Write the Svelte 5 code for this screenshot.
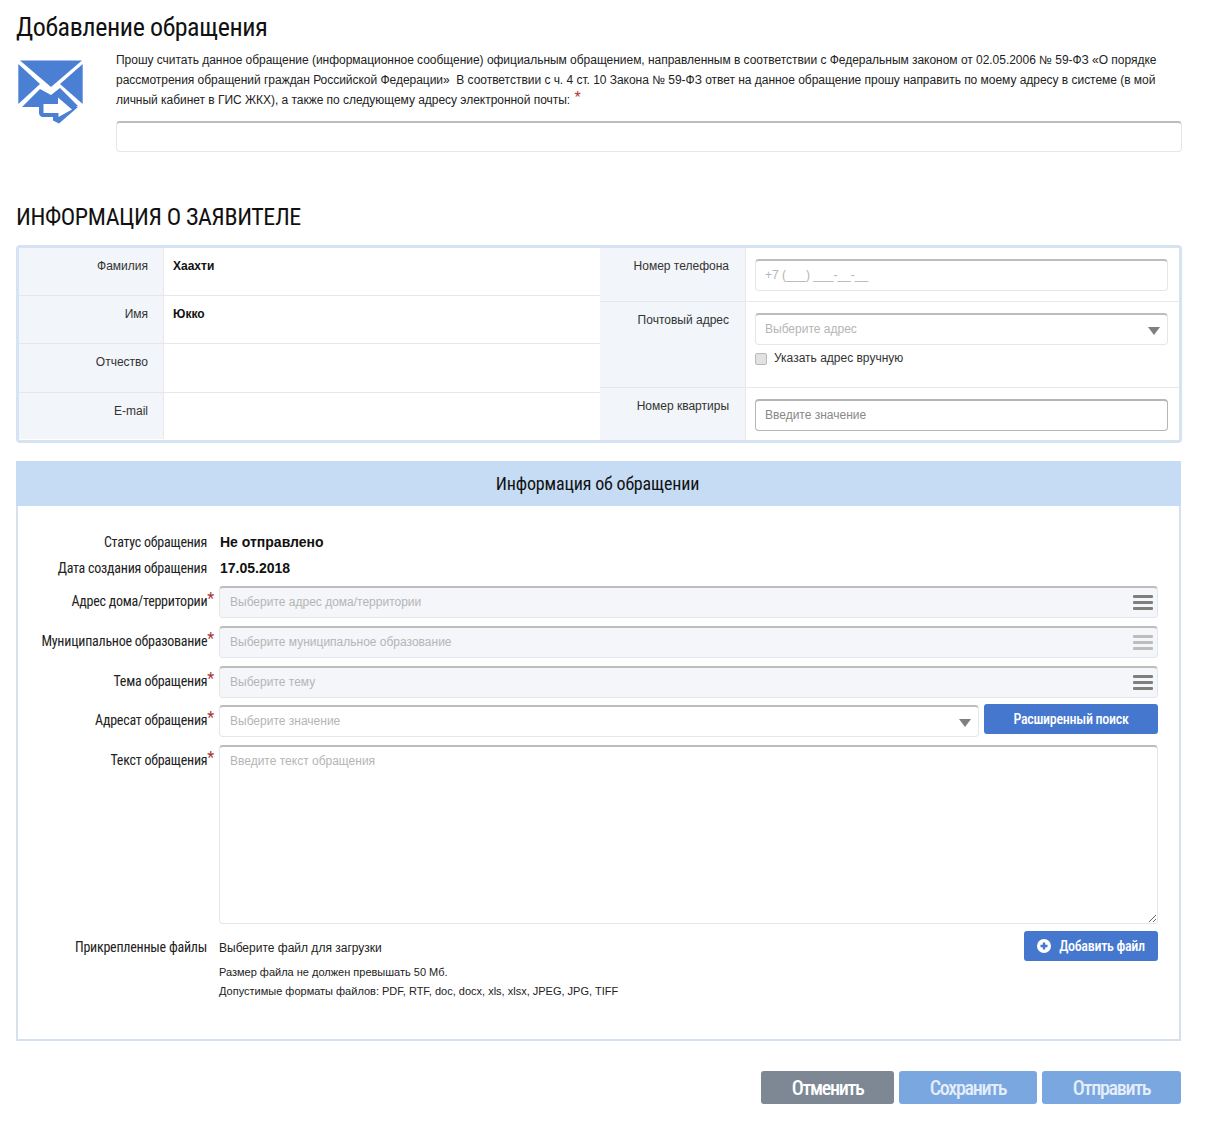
<script>
  const applicant = [
    { label: 'Фамилия', value: 'Хаахти' },
    { label: 'Имя', value: 'Юкко' },
    { label: 'Отчество', value: '' },
    { label: 'E-mail', value: '' }
  ];

  const pickers = [
    { label: 'Адрес дома/территории', placeholder: 'Выберите адрес дома/территории', faded: false },
    { label: 'Муниципальное образование', placeholder: 'Выберите муниципальное образование', faded: true },
    { label: 'Тема обращения', placeholder: 'Выберите тему', faded: false }
  ];
</script>

<div class="page">
  <h1>Добавление обращения</h1>

  <div class="intro">
    <svg class="mail-icon" viewBox="0 0 66 65" width="66" height="65">
      <path fill="#4a7fd4" d="M2 1.5H64L33 28Z" />
      <path fill="#4a7fd4" d="M0.3 5L22 25L0.3 45Z" />
      <path fill="#4a7fd4" d="M64.7 5V45L42 25Z" />
      <path fill="#4a7fd4" d="M4 48L22 30L33 36L42 29L60 47L41 48Z" />
      <path fill="#4a7fd4" d="M21 46H40V40L60 48L41 64.5L35 61.5V58H25C22.5 58 21 56 21 54Z" />
      <path fill="#fff" d="M25.5 45H40V38.5L54 50.5L40.5 58V54H25.5Z" />
    </svg>
    <div class="intro-main">
      <p>
        Прошу считать данное обращение (информационное сообщение) официальным обращением, направленным в соответствии с Федеральным законом от 02.05.2006 № 59-ФЗ «О порядке<br />
        рассмотрения обращений граждан Российской Федерации»&nbsp; В соответствии с ч. 4 ст. 10 Закона № 59-ФЗ ответ на данное обращение прошу направить по моему адресу в системе (в мой<br />
        личный кабинет в ГИС ЖКХ), а также по следующему адресу электронной почты: <span class="star">*</span>
      </p>
      <div class="field email"></div>
    </div>
  </div>

  <h2>ИНФОРМАЦИЯ О ЗАЯВИТЕЛЕ</h2>

  <div class="applicant">
    <div class="applicant-col">
      {#each applicant as row}
        <div class="a-row left">
          <div class="a-label">{row.label}</div>
          <div class="a-value"><b>{row.value}</b></div>
        </div>
      {/each}
    </div>
    <div class="applicant-col">
      <div class="a-row phone">
        <div class="a-label">Номер телефона</div>
        <div class="a-value"><div class="field ph">+7 (___) ___-__-__</div></div>
      </div>
      <div class="a-row post">
        <div class="a-label">Почтовый адрес</div>
        <div class="a-value">
          <div class="field ph with-caret">Выберите адрес<i class="caret"></i></div>
          <label class="check"><input type="checkbox" />Указать адрес вручную</label>
        </div>
      </div>
      <div class="a-row flat">
        <div class="a-label">Номер квартиры</div>
        <div class="a-value"><div class="field ph dark">Введите значение</div></div>
      </div>
    </div>
  </div>

  <section class="info">
    <header><span class="narrow">Информация об обращении</span></header>
    <div class="info-body">
      <div class="row text-row first">
        <div class="label">Статус обращения</div>
        <b class="strong">Не отправлено</b>
      </div>
      <div class="row text-row">
        <div class="label">Дата создания обращения</div>
        <b class="strong">17.05.2018</b>
      </div>

      {#each pickers as p}
        <div class="row picker-row">
          <div class="label">{p.label}<span class="req">*</span></div>
          <div class="field ph picker">
            {p.placeholder}
            <span class="burger" class:faded={p.faded}><i></i><i></i><i></i></span>
          </div>
        </div>
      {/each}

      <div class="row addressee">
        <div class="label">Адресат обращения<span class="req">*</span></div>
        <div class="field ph with-caret grow">Выберите значение<i class="caret"></i></div>
        <button class="btn search"><span class="narrow">Расширенный поиск</span></button>
      </div>

      <div class="row message">
        <div class="label">Текст обращения<span class="req">*</span></div>
        <textarea placeholder="Введите текст обращения"></textarea>
      </div>

      <div class="row files">
        <div class="label">Прикрепленные файлы</div>
        <div class="files-text">
          <div class="files-pick">Выберите файл для загрузки</div>
          <div class="small">Размер файла не должен превышать 50 Мб.</div>
          <div class="small">Допустимые форматы файлов: PDF, RTF, doc, docx, xls, xlsx, JPEG, JPG, TIFF</div>
        </div>
        <button class="btn add">
          <svg viewBox="0 0 14 14" width="14" height="14">
            <circle cx="7" cy="7" r="7" fill="#fff" />
            <path d="M7 3.5v7M3.5 7h7" stroke="#4577cf" stroke-width="2.4" />
          </svg>
          <span class="narrow">Добавить файл</span>
        </button>
      </div>
    </div>
  </section>

  <div class="actions">
    <button class="act cancel"><span class="narrow">Отменить</span></button>
    <button class="act save"><span class="narrow">Сохранить</span></button>
    <button class="act send"><span class="narrow">Отправить</span></button>
  </div>
</div>

<style>
  :global(body) {
    margin: 0;
    background: #fff;
    font-family: "Liberation Sans", Arial, sans-serif;
    font-size: 12px;
    color: #222;
  }

  .page {
    width: 1208px;
    height: 1122px;
    box-sizing: border-box;
    padding: 11px 26px 0 16px;
    overflow: hidden;
  }

  .narrow {
    font-family: "Liberation Sans Narrow", "Roboto Condensed", Roboto, sans-serif;
    font-stretch: condensed;
  }

  h1 {
    margin: 0;
    font: 400 26px/32px "Liberation Sans Narrow", "Roboto Condensed", Roboto, sans-serif;
    font-stretch: condensed;
    letter-spacing: -0.4px;
    color: #111;
  }

  .intro {
    display: flex;
    margin-top: 7px;
  }

  .mail-icon {
    margin: 9px 0 0 2px;
    flex: none;
  }

  .intro-main {
    margin-left: 32px;
    flex: 1;
    min-width: 0;
  }

  .intro-main p {
    margin: 0 0 11px;
    line-height: 20px;
    font-size: 12px;
    letter-spacing: -0.03px;
    white-space: nowrap;
    color: #222;
  }

  .star {
    color: #b03030;
    font-size: 16px;
    line-height: 0;
    vertical-align: 1px;
    margin-left: 1px;
  }

  .field {
    box-sizing: border-box;
    height: 32px;
    border: 1px solid #e4e7ea;
    border-top: 2px solid #bdbdbd;
    border-radius: 4px;
    background: #fff;
  }

  .field.email {
    height: 31px;
  }

  .ph {
    padding: 0 10px;
    line-height: 29px;
    color: #b5b5b5;
    font-size: 12px;
    position: relative;
  }

  .a-value .ph {
    padding: 0 9px;
    line-height: 28px;
  }

  .ph.dark {
    color: #888;
    border: 1px solid #b5b5b5;
    border-top: 2px solid #b5b5b5;
  }

  .caret {
    position: absolute;
    right: 7px;
    top: 12px;
    width: 0;
    height: 0;
    border-left: 6px solid transparent;
    border-right: 6px solid transparent;
    border-top: 8px solid #7f7f7f;
  }

  h2 {
    margin: 49px 0 12px;
    font: 400 24px/32px "Liberation Sans Narrow", "Roboto Condensed", Roboto, sans-serif;
    font-stretch: condensed;
    letter-spacing: -0.4px;
    color: #111;
  }

  .applicant {
    display: grid;
    grid-template-columns: 581px 1fr;
    width: 1166px;
    box-sizing: border-box;
    border: 3px solid #d6e3f3;
    border-radius: 4px;
  }

  .applicant-col {
    display: flex;
    flex-direction: column;
  }

  .a-row {
    display: grid;
    grid-template-columns: 145px 1fr;
    border-bottom: 1px solid #e6e8ea;
    box-sizing: border-box;
  }

  .applicant-col:last-child .a-row {
    grid-template-columns: 146px 1fr;
  }

  .a-row:last-child {
    border-bottom: 0;
  }

  .a-row.left {
    height: 48px;
  }

  .a-row.left:nth-child(3) {
    height: 49px;
  }

  .a-row.left:last-child {
    height: 46px;
  }

  .a-row.phone {
    height: 54px;
  }

  .a-row.post {
    height: 86px;
  }

  .a-row.flat {
    height: 52px;
  }

  .a-label {
    background: #f2f5f9;
    border-right: 1px solid #e6e8ea;
    text-align: right;
    padding: 11px 15px 0 0;
    color: #333;
  }

  .applicant-col:last-child .a-label {
    padding-right: 16px;
  }

  .a-value {
    padding: 11px 0 0 9px;
    color: #111;
    min-width: 0;
  }

  .a-value .field {
    width: 413px;
  }

  .check {
    display: flex;
    align-items: center;
    margin-top: 6px;
    color: #333;
  }

  .check input {
    appearance: none;
    box-sizing: border-box;
    margin: 2px 7px 0 0;
    width: 12px;
    height: 12px;
    background: #e2e2e2;
    border: 1px solid #b9b9b9;
    border-radius: 2px;
  }

  .info {
    margin-top: 18px;
    width: 1165px;
  }

  .info header {
    height: 45px;
    padding-right: 2px;
    background: #c6dcf5;
    text-align: center;
    font-size: 18px;
    line-height: 46px;
    letter-spacing: -0.17px;
    color: #111;
  }

  .info-body {
    height: 535px;
    box-sizing: border-box;
    border: 2px solid #d5e2ee;
    border-top: 0;
    padding: 23px 21px 0 0;
  }

  .row {
    display: grid;
    grid-template-columns: 196px 1fr;
    column-gap: 6px;
  }

  .label {
    text-align: right;
    padding-right: 7px;
    font-size: 14px;
    letter-spacing: -0.24px;
    color: #222;
    font-family: "Liberation Sans Narrow", "Roboto Condensed", Roboto, sans-serif;
    font-stretch: condensed;
    white-space: nowrap;
  }

  .req {
    color: #a33;
    margin-right: -7px;
    font-size: 16px;
    line-height: 1;
    vertical-align: 2px;
  }

  .text-row {
    height: 26px;
    line-height: 26px;
  }

  .strong {
    font-size: 14px;
    color: #111;
  }

  .picker-row {
    margin-bottom: 8px;
    line-height: 30px;
  }

  .text-row + .picker-row {
    margin-top: 5px;
  }

  .picker-row .ph,
  .addressee .ph {
    line-height: 28px;
    margin-left: -1px;
  }

  .picker {
    background: #f4f6fa;
  }

  .burger {
    position: absolute;
    right: 4px;
    top: 7px;
    width: 20px;
    display: flex;
    flex-direction: column;
    gap: 3px;
  }

  .burger i {
    height: 3px;
    border-radius: 1px;
    background: #7f7f7f;
  }

  .burger.faded i {
    background: #bdbdbd;
  }

  .addressee {
    grid-template-columns: 196px 1fr 174px;
    column-gap: 6px;
    line-height: 30px;
    margin-top: -1px;
  }

  .addressee .field {
    margin-right: -1px;
  }

  .addressee .btn {
    height: 30px;
    margin-top: -1px;
  }

  .btn {
    border: 0;
    border-radius: 3px;
    background: #4577cf;
    color: #fff;
    font-size: 14px;
    font-weight: 500;
    letter-spacing: -0.3px;
    padding: 0;
    cursor: pointer;
  }

  .message {
    margin-top: 8px;
    line-height: 30px;
  }

  textarea {
    display: block;
    box-sizing: border-box;
    width: calc(100% + 1px);
    height: 179px;
    margin-left: -1px;
    padding: 7px 10px;
    border: 1px solid #e4e7ea;
    border-top: 2px solid #bdbdbd;
    border-radius: 4px;
    font: 12px "Liberation Sans", Arial, sans-serif;
    outline: none;
  }

  textarea::placeholder {
    color: #b5b5b5;
  }

  .files {
    grid-template-columns: 196px 1fr 134px;
    margin-top: 7px;
  }

  .files .label {
    padding-top: 8px;
    line-height: normal;
  }

  .files-text {
    padding-top: 10px;
    margin-left: -1px;
    color: #222;
  }

  .files-pick {
    margin-bottom: 8px;
  }

  .small {
    font-size: 11px;
    line-height: 19px;
  }

  .add {
    height: 30px;
    width: 134px;
    display: flex;
    align-items: center;
    justify-content: center;
    gap: 8px;
  }

  .actions {
    display: flex;
    justify-content: flex-end;
    gap: 5px;
    width: 1165px;
    margin-top: 30px;
  }

  .act {
    height: 33px;
    border: 0;
    border-radius: 3px;
    color: #fff;
    font-size: 20px;
    font-weight: 500;
    letter-spacing: -1.3px;
    padding: 0;
  }

  .cancel {
    width: 133px;
    background: #7e8894;
  }

  .save {
    width: 138px;
    background: #7ba7e0;
    color: #e4eefa;
  }

  .send {
    width: 139px;
    background: #7ba7e0;
    color: #e4eefa;
  }
</style>
